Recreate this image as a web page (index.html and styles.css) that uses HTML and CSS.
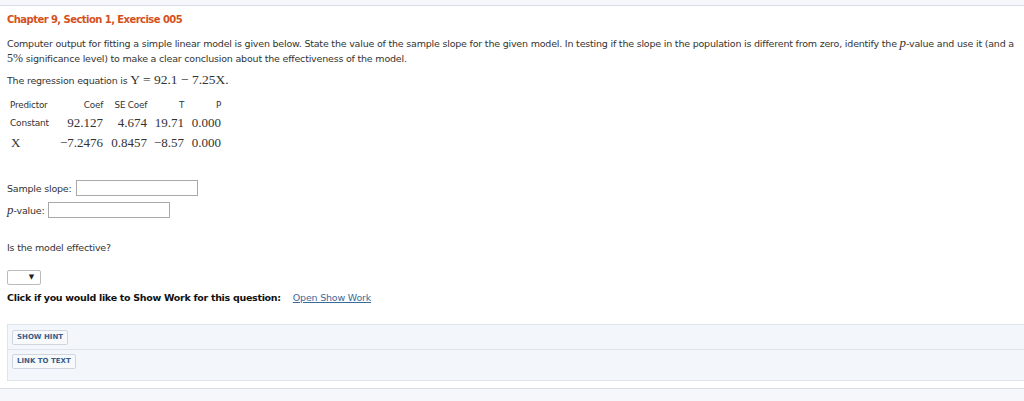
FILE: index.html
```html
<!DOCTYPE html>
<html>
<head>
<meta charset="utf-8">
<link rel="stylesheet" href="styles.css">
</head>
<body>
<div class="topbar"></div>
<div class="content">
  <h1 class="title">Chapter 9, Section 1, Exercise 005</h1>
  <p class="para">Computer output for fitting a simple linear model is given below. State the value of the sample slope for the given model. In testing if the slope in the population is different from zero, identify the <i class="m">p</i>-value and use it (and a <span class="m">5%</span> significance level) to make a clear conclusion about the effectiveness of the model.</p>
  <p class="eq">The regression equation is <span class="m big">Y = 92.1 − 7.25X.</span></p>
  <table class="reg">
    <colgroup><col class="c1"><col class="c2"><col class="c3"><col class="c4"><col class="c5"></colgroup>
    <tr class="hd"><td class="l">Predictor</td><td>Coef</td><td>SE Coef</td><td>T</td><td>P</td></tr>
    <tr><td class="l">Constant</td><td class="m">92.127</td><td class="m">4.674</td><td class="m">19.71</td><td class="m">0.000</td></tr>
    <tr><td class="l m">X</td><td class="m">−7.2476</td><td class="m">0.8457</td><td class="m">−8.57</td><td class="m">0.000</td></tr>
  </table>
  <div class="field f1"><span>Sample slope:</span><input class="inp" type="text"></div>
  <div class="field f2"><span><i class="m pv">p</i>-value:</span><input class="inp" type="text"></div>
  <p class="q">Is the model effective?</p>
  <div class="sel"><span class="arrow">▼</span></div>
  <p class="work"><b>Click if you would like to Show Work for this question:</b><a class="open">Open Show Work</a></p>
  <div class="panel">
    <div class="row r1"><span class="btn">SHOW HINT</span></div>
    <div class="row r2"><span class="btn">LINK TO TEXT</span></div>
  </div>
</div>
<div class="bottombar"></div>
</body>
</html>
```
FILE: styles.css
```css
html, body { margin: 0; padding: 0; background: #fff; }
body { font-family: "DejaVu Sans", Verdana, sans-serif; font-size: 9.5px; letter-spacing: -0.2px; color: #333; width: 1024px; height: 401px; overflow: hidden; }
.topbar { height: 5px; background: #f5f7fa; border-bottom: 1px solid #d8dde5; }
.content { padding: 0 0 0 7px; }
.title { margin: 0; padding-top: 7px; font-size: 10px; font-weight: bold; color: #d4501e; line-height: 14px; letter-spacing: -0.55px; }
.para { margin: 0; padding-top: 9px; line-height: 14px; width: 1015px; }
.m { font-family: "Liberation Serif", "Times New Roman", serif; letter-spacing: 0; }
i.m { font-size: 13px; }
.para span.m { font-size: 12px; }
.eq { margin: 0; padding-top: 6px; line-height: 16px; }
.big { font-size: 13.5px; }
.reg { border-collapse: collapse; margin-top: 7px; margin-left: 3px; table-layout: fixed; }
.c1 { width: 50px; } .c2 { width: 42px; } .c3 { width: 44px; } .c4 { width: 37px; } .c5 { width: 37px; }
.reg td { padding: 0; text-align: right; height: 20px; font-size: 13px; white-space: nowrap; }
.reg tr.hd td { font-family: "DejaVu Sans", Verdana, sans-serif; font-size: 8.8px; height: 17px; }
.reg td.l { text-align: left; font-family: "DejaVu Sans", Verdana, sans-serif; font-size: 9px; }
.reg td.l.m { font-family: "Liberation Serif", serif; font-size: 13px; padding-left: 1px; }
.field { display: flex; align-items: center; height: 16px; }
.f1 { margin-top: 27px; }
.f2 { margin-top: 6px; }
.field span { margin-right: 4px; }
.pv { font-size: 13px; }
.inp { width: 120px; height: 14px; border: 1px solid #a9a9a9; padding: 0; margin: 0; box-sizing: content-box; }
.q { margin: 0; padding-top: 23px; line-height: 14px; }
.sel { margin-top: 15px; width: 32px; height: 13px; border: 1px solid #bbb; border-radius: 2px; position: relative; }
.arrow { position: absolute; right: 6px; top: 2px; font-size: 7px; line-height: 9px; color: #222; }
.work { margin: 0; padding-top: 6px; line-height: 14px; color: #111; }
.work b { letter-spacing: -0.3px; }
.open { color: #3a6a9a; text-decoration: underline; margin-left: 12px; }
.panel { margin-top: 19px; background: #f3f6fa; border: 1px solid #dfe4ea; border-right: none; }
.row { padding: 0 4px; box-sizing: border-box; }
.r1 { height: 25px; padding-top: 5px; border-bottom: 1px solid #dfe4ea; }
.r2 { height: 30px; padding-top: 4px; }
.btn { display: inline-block; font-size: 7px; font-weight: bold; letter-spacing: 0; color: #3a5f8a; background: #f7f9fb; border: 1px solid #cfd6df; border-radius: 2px; padding: 2px 4px; line-height: 9px; }
.bottombar { margin-top: 7px; border-top: 1px solid #d8dde5; height: 20px; background: #f5f7fa; }
```
